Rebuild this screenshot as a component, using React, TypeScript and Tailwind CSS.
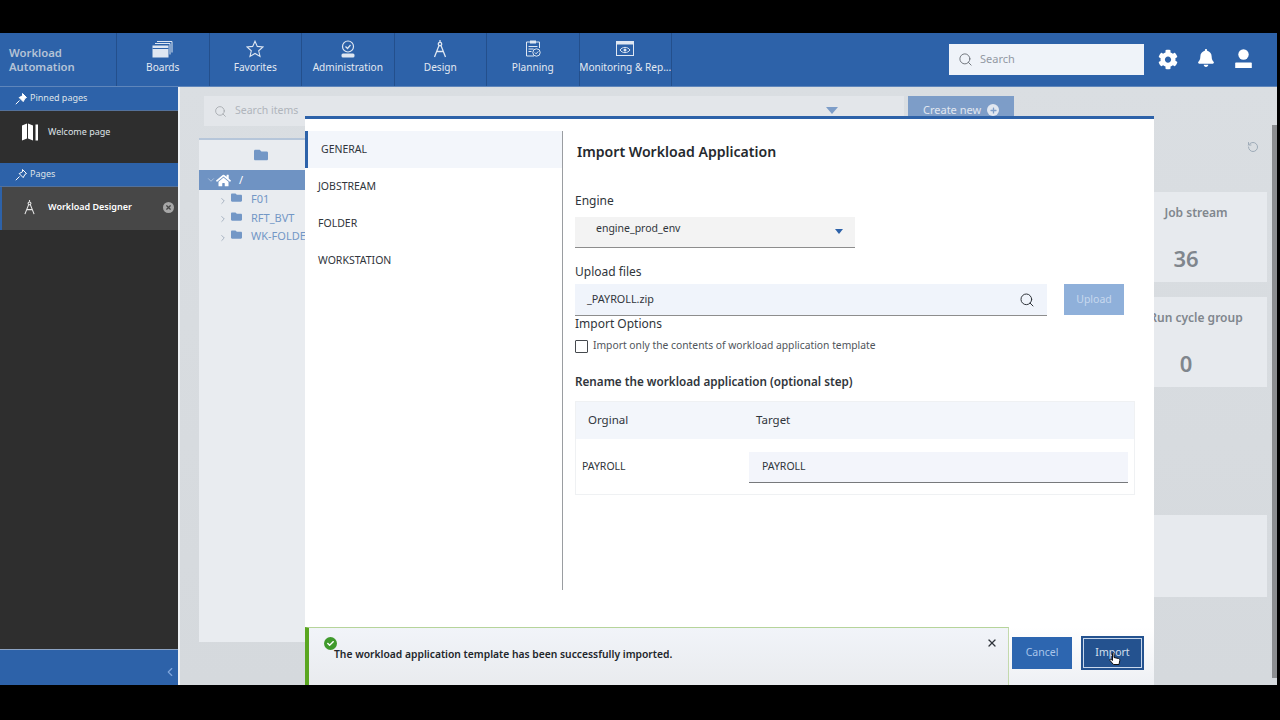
import { ChevronDown, ChevronLeft, ChevronRight, RotateCcw, Search, X } from "lucide-react"
import { FaBell, FaCheck, FaCog, FaFolder, FaHome, FaPlus, FaTimes } from "react-icons/fa"

const font = { fontFamily: '"Noto Sans", "Liberation Sans", sans-serif' }

function BoardsIcon() {
  return (
    <svg width="21" height="18" viewBox="0 0 21 18" fill="none">
      <path d="M5 1.500h15v11" stroke="#dfe7f2" strokeWidth="1" />
      <path d="M3 3.500h15v11" stroke="#dfe7f2" strokeWidth="1" />
      <rect x="0.500" y="5.500" width="16" height="12" fill="#dfe7f2" />
      <rect x="0.500" y="8" width="16" height="1" fill="#2d62a9" />
    </svg>
  )
}

function AdminIcon() {
  return (
    <svg width="18" height="18" viewBox="0 0 18 18" fill="none" stroke="#dfe7f2">
      <circle cx="9" cy="6.500" r="5.500" strokeWidth="1.200" />
      <path d="M6.500 6.500l2 2 3-3.500" strokeWidth="1.200" />
      <rect x="2.500" y="13.500" width="13" height="4" rx="1.500" fill="#dfe7f2" stroke="none" />
    </svg>
  )
}

function CompassIcon({ size = 16, color = "#dfe7f2" }: { size?: number; color?: string }) {
  return (
    <svg width={size} height={size} viewBox="0 0 16 18" fill="none" stroke={color} strokeWidth="1.300">
      <circle cx="8" cy="4" r="1.700" />
      <path d="M8 0v2M7 5.500L2.500 17M9 5.500L13.500 17M4.500 11.500h7" />
    </svg>
  )
}

function PlanningIcon() {
  return (
    <svg width="16" height="17" viewBox="0 0 16 17" fill="none" stroke="#dfe7f2" strokeWidth="1">
      <path d="M5 2H1.500v14H9M11 2h3.500v6" />
      <rect x="5" y="0.500" width="6" height="3" fill="#dfe7f2" stroke="none" />
      <path d="M3.500 6.500h9M3.500 9h5M3.500 11.500h3" />
      <circle cx="11.500" cy="12.500" r="3.700" />
      <path d="M9.800 12.500l1.300 1.300 2.200-2.400" />
    </svg>
  )
}

function MonitorIcon() {
  return (
    <svg width="18" height="15" viewBox="0 0 18 15" fill="none" stroke="#dfe7f2">
      <rect x="0.500" y="0.500" width="17" height="14" strokeWidth="1" />
      <rect x="0.500" y="0.500" width="17" height="3" fill="#dfe7f2" stroke="none" />
      <path d="M4 9c2.500-3.500 7.500-3.500 10 0c-2.500 3.500-7.500 3.500-10 0z" strokeWidth="1" />
      <circle cx="9" cy="9" r="1.500" fill="#dfe7f2" stroke="none" />
    </svg>
  )
}

function StarIcon() {
  return (
    <svg width="18" height="18" viewBox="0 0 18 18" fill="none" stroke="#dfe7f2" strokeWidth="1.100">
      <path d="M9 1.200l2.300 5.200 5.700.6-4.300 3.800 1.300 5.600L9 13.500l-5 2.900 1.300-5.600L1 7l5.700-.6z" />
    </svg>
  )
}

function UserIcon() {
  return (
    <svg width="17" height="20" viewBox="0 0 17 20" fill="white">
      <circle cx="8.500" cy="5.500" r="5.200" />
      <path d="M1 13.500h15q.8 0 .8 1v4.500H.2v-4.500q0-1 .8-1z" />
    </svg>
  )
}

function PinIcon({ outline }: { outline?: boolean }) {
  return (
    <svg width="13" height="13" viewBox="0 0 13 13" fill={outline ? "none" : "white"} stroke="white" strokeWidth="1">
      <path d="M7.500 1.500l4 4-1.500.8-1.800 3.300-4-4 3.300-1.800z" />
      <path d="M4.500 8.500L0.800 12.200" />
    </svg>
  )
}

function MapIcon() {
  return (
    <svg width="16" height="18" viewBox="0 0 16 18" fill="white">
      <path d="M0 2.500L5 .5v15l-5 2z" />
      <path d="M6 .5l5 2v15l-5-2z" />
      <path d="M13.500 1.500H16v16h-2.500z" />
    </svg>
  )
}

const navItems = [
  { label: "Boards", icon: <BoardsIcon /> },
  { label: "Favorites", icon: <StarIcon /> },
  { label: "Administration", icon: <AdminIcon /> },
  { label: "Design", icon: <CompassIcon size={18} /> },
  { label: "Planning", icon: <PlanningIcon /> },
  { label: "Monitoring & Rep...", icon: <MonitorIcon /> },
]

function Header() {
  return (
    <div className="flex h-[54px] shrink-0 bg-[#2d62a9] border-b border-[#5f86bb]">
      <div className="w-[116px] pl-[9px] pt-[13px] text-[11.300px] leading-[14px] font-semibold text-[#b5c3d6]">
        <div>Workload</div>
        <div>Automation</div>
      </div>
      {navItems.map((item) => (
        <div
          key={item.label}
          className="w-[92.500px] flex flex-col items-center border-l border-[#234f8c] text-[10.100px] leading-[14px] text-[#e3e9f2] whitespace-nowrap"
        >
          <div className="h-[17px] mt-[7px] mb-[3px] flex items-center justify-center">{item.icon}</div>
          <span>{item.label}</span>
        </div>
      ))}
      <div className="w-px bg-[#234f8c]" />
      <div className="ml-auto flex items-start">
        <div className="mt-[11px] w-[195px] h-[31px] bg-[#eff3f9] flex items-center pl-[9px] text-[11px] text-[#9299a3]">
          <Search size={15} strokeWidth={1.500} className="text-[#6b7078]" />
          <span className="ml-[7px]">Search</span>
        </div>
        <div className="ml-[14px] mt-[16px] w-[20px] flex justify-center"><FaCog size={21} color="white" /></div>
        <div className="ml-[18px] mt-[16px] w-[20px] flex justify-center"><FaBell size={18} color="white" /></div>
        <div className="ml-[17px] mt-[16px] mr-[24px] w-[20px] flex justify-center"><UserIcon /></div>
      </div>
    </div>
  )
}

function Sidebar() {
  return (
    <div className="w-[178px] shrink-0 bg-[#2e2e2e] flex flex-col text-[9px] text-[#dfe3e8] whitespace-nowrap">
      <div className="h-[24px] bg-[#2d62a9] border-b border-[#54719a] flex items-center pl-[15px] pb-[1px] gap-[2px]">
        <PinIcon />
        <span>Pinned pages</span>
      </div>
      <div className="h-[52px] flex items-center pl-[22px] pb-[10px]">
        <MapIcon />
        <span className="ml-[10px]">Welcome page</span>
      </div>
      <div className="h-[24px] bg-[#2d62a9] border-b border-[#54719a] flex items-center pl-[15px] pb-[1px] gap-[2px]">
        <PinIcon outline />
        <span>Pages</span>
      </div>
      <div className="h-[43px] bg-[#474747] border-l-2 border-[#2d62a9] flex items-center pl-[20px] pb-[3px] font-semibold text-white">
        <CompassIcon size={15} color="#e6e6e6" />
        <span className="ml-[11px] w-[115px]">Workload Designer</span>
        <div className="w-[11px] h-[11px] rounded-full bg-[#a7a7a7] flex items-center justify-center">
          <FaTimes size={7} color="#474747" />
        </div>
      </div>
      <div className="flex-1" />
      <div className="h-[36px] bg-[#2d62a9] border-t border-[#8ba3c4] flex items-center justify-end pr-[1px]">
        <ChevronLeft size={14} className="text-[#7fa6dc] mt-[8px]" />
      </div>
    </div>
  )
}

function TreeRow({ label }: { label: string }) {
  return (
    <div className="h-[18.500px] flex items-center pl-[19px] text-[#7397c6] text-[11px] whitespace-nowrap">
      <ChevronRight size={10} className="text-[#9aa7b8] mt-[3px]" />
      <FaFolder size={11} className="ml-[3px] -mt-[3px]" />
      <span className="ml-[9px]">{label}</span>
    </div>
  )
}

function StatCard({ title, value }: { title: string; value: string }) {
  return (
    <div className="h-[90px] mb-[15px] bg-[#e7eaee] flex flex-col items-center font-semibold text-[#80868d]">
      <div className="mt-[12px] pl-[20px] text-[12px] leading-[18px] whitespace-nowrap">{title}</div>
      <div className="mt-[21px] text-[22px] leading-[30px]">{value}</div>
    </div>
  )
}

function Background() {
  return (
    <div className="flex-1 flex min-w-0 bg-gradient-to-b from-[#dadee2] to-[#d5d9dd] border-l-2 border-[#eef1f4]">
      <div className="flex-1 min-w-0 pl-[19px] pt-[9px]">
        <div className="flex h-[30px] ml-[5px]">
          <div className="w-[700px] bg-[#e3e6ea] flex items-center pl-[10px] pr-[66px] text-[10.500px] text-[#b0b5bc]">
            <Search size={13} strokeWidth={1.500} className="text-[#a1a5aa]" />
            <span className="ml-[8px]">Search items</span>
            <svg width="12" height="7" viewBox="0 0 12 7" fill="#7d9dc8" className="ml-auto mb-[1px]">
              <path d="M0 0h12L6 7z" />
            </svg>
          </div>
          <div className="ml-[4px] w-[106px] h-[30px] bg-[#7d9dc8] flex pl-[15px] pt-[7px] text-[11px] leading-[14px] text-[#e1e7f0]">
            <span>Create new</span>
            <div className="ml-[6px] mt-[1px] w-[12px] h-[12px] rounded-full bg-[#e1e7f0] flex items-center justify-center">
              <FaPlus size={7} color="#7d9dc8" />
            </div>
          </div>
        </div>
        <div className="flex justify-between mt-[12px] pr-[5px]">
          <div className="w-[400px] h-[504px] bg-[#e9ecf0] border-t-2 border-[#b6c6da]">
            <div className="h-[30px] w-[124px] flex items-center justify-center">
              <FaFolder size={14} color="#7397c6" />
            </div>
            <div className="h-[20px] bg-[#6f93c3] flex items-center pl-[7px] text-white text-[11px]">
              <ChevronDown size={10} className="text-[#b9cbe3]" />
              <FaHome size={15} />
              <span className="ml-[8px]">/</span>
            </div>
            <div>
              <TreeRow label="F01" />
              <TreeRow label="RFT_BVT" />
              <TreeRow label="WK-FOLDER" />
            </div>
          </div>
          <div className="w-[162px]">
            <div className="h-[54px] flex justify-end pt-[3px] pr-[8px]">
              <RotateCcw size={12} className="text-[#9eabb8]" />
            </div>
            <StatCard title="Job stream" value="36" />
            <StatCard title="Run cycle group" value="0" />
            <div className="h-[82px] mt-[128px] bg-[#e7eaee]" />
          </div>
        </div>
      </div>
      <div className="w-[5px] shrink-0 mt-[38px] mb-[7px] bg-[#8c8e91]" />
    </div>
  )
}

function TabItem({ label, active }: { label: string; active?: boolean }) {
  if (active) {
    return (
      <div className="h-[37px] bg-[#f3f6fb] border-l-[3px] border-[#2d62a9] flex items-center pl-[13px] text-[#30353b]">
        {label}
      </div>
    )
  }
  return <div className="h-[37px] flex items-center pl-[13px] text-[#30353b]">{label}</div>
}

function ImportPanel() {
  return (
    <div className="flex-1 pl-[12px] pr-[18px] text-[#30353b]">
      <h2 className="pl-[2px] h-[42px] flex items-center text-[14.100px] font-semibold text-[#25292e]">Import Workload Application</h2>
      <div className="mt-[19px] text-[12px] leading-[18px]">Engine</div>
      <div className="mt-[7px] w-[280px] h-[31px] bg-[#f3f3f3] border-b border-[#8d8d8d] flex pl-[21px] pr-[12px] pt-[4px] justify-between text-[10.500px] leading-[15px]">
        <span>engine_prod_env</span>
        <svg width="8" height="5" viewBox="0 0 8 5" fill="#2d62a9" className="mt-[8px]">
          <path d="M0 0h8L4 5z" />
        </svg>
      </div>
      <div className="mt-[15px] text-[12px] leading-[18px]">Upload files</div>
      <div className="flex mt-[3px]">
        <div className="w-[472px] h-[32px] bg-[#f0f4fb] border-b border-[#8d8d8d] flex items-center justify-between pl-[12px] pr-[12px] text-[10.800px]">
          <span>_PAYROLL.zip</span>
          <Search size={16} strokeWidth={1.500} className="text-[#30353b]" />
        </div>
        <div className="ml-[17px] w-[60px] h-[31px] bg-[#8fb0da] flex items-center justify-center text-[10.500px] text-[#c7d8ee]">Upload</div>
      </div>
      <div className="mt-[-1px] text-[12px] leading-[18px] h-[16px]">Import Options</div>
      <div className="flex items-center mt-[8px] h-[14px]">
        <div className="w-[13px] h-[13px] border border-[#45494e] rounded-[1px]" />
        <span className="ml-[5px] text-[10.300px] text-[#50555b]">Import only the contents of workload application template</span>
      </div>
      <div className="mt-[19px] text-[11.700px] leading-[18px] font-semibold">Rename the workload application (optional step)</div>
      <div className="mt-[11px] w-[560px] h-[94px] border border-[#eff1f3]">
        <div className="h-[37px] bg-[#f3f6fb] flex items-center text-[11.500px] pb-[1px]">
          <span className="w-[180px] pl-[12px]">Orginal</span>
          <span>Target</span>
        </div>
        <div className="flex items-center pl-[6px] pr-[6px] pt-[13px] text-[10.500px]">
          <span className="w-[167px] -mt-[1px]">PAYROLL</span>
          <div className="flex-1 h-[31px] bg-[#f3f5fb] border-b border-[#77797c] flex items-center pl-[13px]">PAYROLL</div>
        </div>
      </div>
    </div>
  )
}

function Footer() {
  return (
    <div className="h-[58px] shrink-0 flex bg-gradient-to-b from-white to-[#eef0f4]">
      <div className="relative w-[704px] border-l-4 border-t border-r border-l-[#5aa620] border-t-[#b6d49a] border-r-[#c3d9ac] bg-gradient-to-b from-[#f1f4f9] to-[#e9ebee] pl-[25px] pt-[18px] text-[10.300px] leading-[16px] font-semibold text-[#22262b]">
        The workload application template has been successfully imported.
        <div className="absolute left-[15px] top-[9px] w-[13px] h-[13px] rounded-full bg-[#3f9a2c] flex items-center justify-center">
          <FaCheck size={7} color="white" />
        </div>
        <X size={12} strokeWidth={2.500} className="absolute right-[10px] top-[9px] text-[#30353b]" />
      </div>
      <div className="ml-[3px] mt-[10px] w-[60px] h-[32px] bg-[#2d66b0] flex items-center justify-center text-[10.500px] text-[#a9c5ea]">Cancel</div>
      <div className="relative ml-[9px] mt-[9px] w-[63px] h-[34px] bg-[#24528f] border-2 border-[#24528f] outline outline-1 -outline-offset-[3px] outline-[#c9d8ec] flex items-center justify-center text-[10.500px] text-[#d5e0ef]">
        Import
        <svg width="12" height="14" viewBox="0 0 12 14" className="absolute left-[26px] top-[14px]">
          <path d="M3.500 1.500c0-1 1.500-1 1.500 0v4l4.500 1c1 .3 1.500 1 1.300 2l-.8 4H4.500L1 8.500c-.6-.9.5-1.700 1.300-1l1.200 1z" fill="white" stroke="#111" strokeWidth="1" />
        </svg>
      </div>
    </div>
  )
}

function ImportDialog() {
  return (
    <div className="absolute left-[127px] top-[29px] bottom-0 w-[849px] bg-white border-t-[3px] border-[#2d62a9] flex flex-col">
      <div className="flex-1 min-h-0 pt-[12px]">
        <div className="flex h-[459px]">
          <div className="w-[258px] text-[10.500px] border-r border-[#9a9da1]">
            <TabItem label="GENERAL" active />
            <TabItem label="JOBSTREAM" />
            <TabItem label="FOLDER" />
            <TabItem label="WORKSTATION" />
          </div>
          <ImportPanel />
        </div>
      </div>
      <Footer />
    </div>
  )
}

export default function App() {
  return (
    <div className="h-screen w-full bg-black flex flex-col overflow-hidden" style={font}>
      <div className="h-[33px] shrink-0" />
      <div className="h-[652px] mr-[3px] flex flex-col">
        <Header />
        <div className="relative flex-1 flex min-h-0">
          <Sidebar />
          <div className="relative flex-1 flex min-w-0">
            <Background />
            <ImportDialog />
          </div>
        </div>
      </div>
    </div>
  )
}
